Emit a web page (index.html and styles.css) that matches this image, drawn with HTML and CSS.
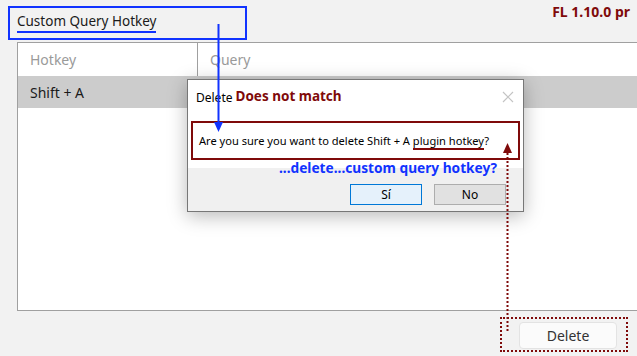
FILE: index.html
```html
<!DOCTYPE html>
<html lang="en">

<head>
    <meta charset="UTF-8">
    <meta name="viewport" content="width=device-width, initial-scale=1.0">
    <title>Custom Query Hotkey</title>
    <link rel="stylesheet" href="styles.css">
</head>

<body>
    <div class="page">
        <div class="top-bar">
            <span class="page-title">Custom Query Hotkey</span>
            <span class="version">FL 1.10.0 pr</span>
        </div>

        <div class="grid-panel">
            <div class="grid-head">
                <div class="col col-hotkey">Hotkey</div>
                <div class="col col-query">Query</div>
            </div>
            <div class="grid-row selected">
                <div class="col col-hotkey">Shift + A</div>
                <div class="col col-query"></div>
            </div>
        </div>

        <div class="bottom-bar">
            <button class="btn-delete">Delete</button>
        </div>

        <!-- message box -->
        <div class="msg-box">
            <div class="msg-title">
                <span class="msg-caption">Delete</span>
                <span class="note-red">Does not match</span>
                <svg class="msg-close" width="12" height="12" viewBox="0 0 12 12">
                    <path d="M1 1L11 11M11 1L1 11" stroke="#c4c4c4" stroke-width="1.2" />
                </svg>
            </div>
            <div class="msg-body">
                Are you sure you want to delete Shift + A <span class="mark-red">plugin hotkey</span>?
            </div>
            <div class="msg-foot">
                <button class="msg-btn primary">Sí</button>
                <button class="msg-btn">No</button>
            </div>
        </div>

        <!-- annotations -->
        <div class="note-box blue-box"></div>
        <div class="note-box red-box"></div>
        <div class="note-box dotted-box"></div>
        <div class="note-blue">...delete...custom query hotkey?</div>
        <svg class="note-lines" width="637" height="356" viewBox="0 0 637 356">
            <line x1="218.5" y1="24" x2="218.5" y2="124" stroke="#1133ff" stroke-width="2" />
            <path d="M214 122L223 122L218.5 132Z" fill="#1133ff" />
            <line x1="507.5" y1="153" x2="507.5" y2="333" stroke="#7f0a0a" stroke-width="2" stroke-dasharray="2 2" />
            <path d="M503 153L512 153L507.5 143Z" fill="#7f0a0a" />
        </svg>
    </div>
</body>

</html>
```

FILE: styles.css
```css
* {
    margin: 0;
    padding: 0;
    box-sizing: border-box;
}

body {
    width: 637px;
    height: 356px;
    overflow: hidden;
    background-color: #f2f2f2;
    font-family: "Noto Sans", "Open Sans", sans-serif;
}

.page {
    position: relative;
    width: 637px;
    height: 356px;
}

.top-bar {
    height: 42px;
    display: flex;
    justify-content: space-between;
    align-items: flex-start;
    padding: 0 7px 0 17px;
}

.page-title {
    margin-top: 12px;
    font-size: 13.5px;
    color: #1a1a1a;
    border-bottom: 2px solid #1133ff;
    line-height: 19px;
}

.version {
    margin-top: 2px;
    font-size: 14px;
    font-weight: bold;
    color: #7f0a0a;
}

.grid-panel {
    margin-left: 17px;
    height: 269px;
    background-color: #fff;
    border: 1px solid #a0a0a0;
    border-right: none;
}

.grid-head,
.grid-row {
    display: flex;
    height: 33px;
    align-items: center;
}

.grid-row {
    height: 32px;
}

.grid-row.selected {
    background-color: #cccccc;
}

.col {
    font-size: 14px;
    padding-left: 12px;
    height: 100%;
    display: flex;
    align-items: center;
}

.col-hotkey {
    width: 180px;
}

.grid-head .col {
    color: #9a9a9a;
}

.grid-head .col-hotkey {
    border-right: 1px solid #a0a0a0;
}

.grid-row .col {
    color: #1a1a1a;
}

.bottom-bar {
    display: flex;
    justify-content: flex-end;
    padding: 11px 20px 0 0;
}

.btn-delete {
    width: 98px;
    height: 27px;
    font-family: inherit;
    font-size: 14px;
    color: #333;
    background-color: #fbfbfb;
    border: 1px solid #e3e3e3;
    border-radius: 4px;
}

/* message box */
.msg-box {
    position: absolute;
    left: 187px;
    top: 79px;
    width: 337px;
    height: 133px;
    background-color: #f0f0f0;
    border: 1px solid #777;
    box-shadow: 0 4px 18px rgba(0, 0, 0, .28);
    display: flex;
    flex-direction: column;
}

.msg-title {
    height: 31px;
    background-color: #fff;
    display: flex;
    align-items: center;
    padding: 0 9px 0 8px;
}

.msg-caption {
    font-size: 12px;
    color: #000;
    margin-top: 3px;
}

.msg-close {
    margin-left: auto;
    margin-top: 2px;
}

.note-red {
    font-size: 13.5px;
    font-weight: bold;
    color: #7f0a0a;
    margin-left: 3px;
}

.msg-body {
    height: 57px;
    background-color: #fff;
    font-size: 11.1px;
    color: #000;
    padding: 22px 0 0 11px;
    line-height: 16px;
}

.mark-red {
    border-bottom: 2px solid #7f0a0a;
}

.msg-foot {
    flex: 1;
    display: flex;
    justify-content: flex-end;
    align-items: center;
    gap: 12px;
    padding: 10px 17px 0 0;
}

.msg-btn {
    width: 72px;
    height: 21px;
    font-family: inherit;
    font-size: 12px;
    color: #000;
    background-color: #e1e1e1;
    border: 1px solid #adadad;
}

.msg-btn.primary {
    background-color: #e5f1fb;
    border-color: #0078d7;
}

/* annotations */
.note-box {
    position: absolute;
}

.blue-box {
    left: 8px;
    top: 6px;
    width: 239px;
    height: 34px;
    border: 2px solid #1133ff;
}

.red-box {
    left: 191px;
    top: 121px;
    width: 329px;
    height: 39px;
    border: 2px solid #7f0a0a;
}

.dotted-box {
    left: 500px;
    top: 317px;
    width: 128px;
    height: 35px;
    border: 2px dotted #7f0a0a;
}

.note-blue {
    position: absolute;
    left: 279px;
    top: 158px;
    font-size: 13.7px;
    font-weight: bold;
    color: #1133ff;
}

.note-lines {
    position: absolute;
    left: 0;
    top: 0;
    pointer-events: none;
}
```
